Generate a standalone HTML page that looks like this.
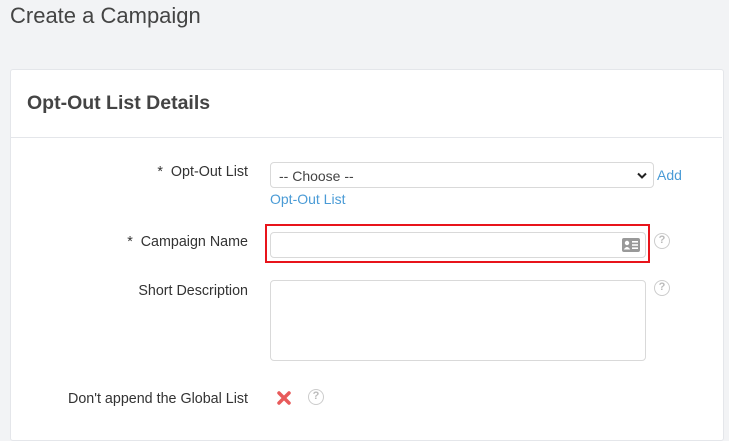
<!DOCTYPE html>
<html><head><style>
body{margin:0;width:729px;height:434px;background:#f2f3f5;font-family:"Liberation Sans",sans-serif;position:relative;overflow:hidden;color:#333}
.a{position:absolute}
h1{position:absolute;left:10px;top:3px;margin:0;font-weight:normal;font-size:22px;color:#444}
.card{left:10px;top:69px;width:712px;height:370px;background:#fff;border-radius:3px;border:1px solid #e4e6ea}
.lbl{font-size:14.3px;color:#333;text-align:right;width:240px;left:8px}
.ctl{border:1px solid #d9d9d9;border-radius:4px;background:#fff;box-sizing:border-box}
.q{width:16px;height:16px;border:1.5px solid #ccc;border-radius:50%;box-sizing:border-box;font-size:11px;font-weight:bold;color:#bbb;text-align:center;line-height:13px}
.link{color:#4a9bd6;font-size:14px}
</style></head><body>
<h1>Create a Campaign</h1>
<div class="a card"></div>
<div class="a" style="left:27px;top:92px;font-size:19.5px;font-weight:bold;color:#444">Opt-Out List Details</div>
<div class="a" style="left:11px;top:137px;width:711px;height:1px;background:#e4e6ea"></div>

<div class="a lbl" style="top:164px">*&nbsp; Opt-Out List</div>
<div class="a ctl" style="left:270px;top:162px;width:384px;height:26px;font-size:14px;padding:5px 8px;color:#444">-- Choose --
<svg class="a" style="right:6px;top:9px" width="10" height="7" viewBox="0 0 10 7"><path d="M1 1.5L5 5.5L9 1.5" stroke="#222" stroke-width="2" fill="none"/></svg></div>
<div class="a link" style="left:657px;top:167px">Add</div>
<div class="a link" style="left:270px;top:191px">Opt-Out List</div>

<div class="a lbl" style="top:234px">*&nbsp; Campaign Name</div>
<div class="a" style="left:265px;top:224px;width:385px;height:39px;border:2px solid #e8141b;box-sizing:border-box"></div>
<div class="a ctl" style="left:270px;top:232px;width:376px;height:26px">
<svg class="a" style="left:351px;top:5px" width="18" height="14" viewBox="0 0 18 14"><rect x="0" y="0" width="18" height="14" rx="2" fill="#999"/><circle cx="5" cy="5" r="2.2" fill="#fff"/><path d="M1.8 11.5Q5 6.5 8.2 11.5Z" fill="#fff"/><rect x="10" y="3" width="6" height="1.6" fill="#fff"/><rect x="10" y="6.2" width="6" height="1.6" fill="#fff"/><rect x="10" y="9.4" width="6" height="1.6" fill="#fff"/></svg></div>
<div class="a q" style="left:654px;top:233px">?</div>

<div class="a lbl" style="top:283px">Short Description</div>
<div class="a ctl" style="left:270px;top:280px;width:376px;height:81px"></div>
<div class="a q" style="left:654px;top:280px">?</div>

<div class="a lbl" style="top:391px">Don't append the Global List</div>
<svg class="a" style="left:277px;top:391px" width="14" height="14" viewBox="0 0 14 14"><path d="M2 2L12 12M12 2L2 12" stroke="#e85a5a" stroke-width="3.5" stroke-linecap="round"/></svg>
<div class="a q" style="left:308px;top:389px">?</div>
</body></html>
